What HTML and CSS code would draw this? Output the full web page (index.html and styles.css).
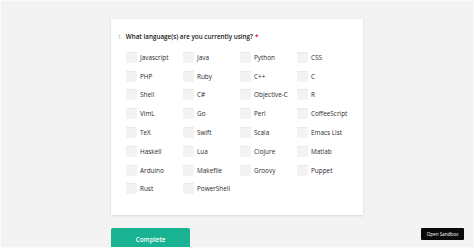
FILE: index.html
```
<!DOCTYPE HTML>
<html>

<head>
    <title>Survey</title>
    <meta name="viewport" content="width=device-width, initial-scale=1">
    <link rel="stylesheet" href="styles.css">
</head>

<body>
    <div class="page">
        <div class="card">
            <h5 class="title"><span class="num">1.</span>What language(s) are you currently using?<span class="req">*</span></h5>
            <div class="choices">
                <label class="item"><span class="box"></span>Javascript</label>
                <label class="item"><span class="box"></span>Java</label>
                <label class="item"><span class="box"></span>Python</label>
                <label class="item"><span class="box"></span>CSS</label>
                <label class="item"><span class="box"></span>PHP</label>
                <label class="item"><span class="box"></span>Ruby</label>
                <label class="item"><span class="box"></span>C++</label>
                <label class="item"><span class="box"></span>C</label>
                <label class="item"><span class="box"></span>Shell</label>
                <label class="item"><span class="box"></span>C#</label>
                <label class="item"><span class="box"></span>Objective-C</label>
                <label class="item"><span class="box"></span>R</label>
                <label class="item"><span class="box"></span>VimL</label>
                <label class="item"><span class="box"></span>Go</label>
                <label class="item"><span class="box"></span>Perl</label>
                <label class="item"><span class="box"></span>CoffeeScript</label>
                <label class="item"><span class="box"></span>TeX</label>
                <label class="item"><span class="box"></span>Swift</label>
                <label class="item"><span class="box"></span>Scala</label>
                <label class="item"><span class="box"></span>Emacs List</label>
                <label class="item"><span class="box"></span>Haskell</label>
                <label class="item"><span class="box"></span>Lua</label>
                <label class="item"><span class="box"></span>Clojure</label>
                <label class="item"><span class="box"></span>Matlab</label>
                <label class="item"><span class="box"></span>Arduino</label>
                <label class="item"><span class="box"></span>Makefile</label>
                <label class="item"><span class="box"></span>Groovy</label>
                <label class="item"><span class="box"></span>Puppet</label>
                <label class="item"><span class="box"></span>Rust</label>
                <label class="item"><span class="box"></span>PowerShell</label>
            </div>
        </div>
        <button class="complete">Complete</button>
    </div>
    <a class="sandbox">Open Sandbox</a>
</body>

</html>
```

FILE: styles.css
```
html {
    font-family: "Open Sans", "Liberation Sans", sans-serif;
    background-color: #fbfbfb;
}

body {
    margin: 0;
}

.page {
    margin: 1px;
    height: 246px;
    overflow: hidden;
    background-color: #f3f3f3;
    padding: 18px 0 0 110px;
    box-sizing: border-box;
}

.card {
    width: 252px;
    box-sizing: border-box;
    background-color: #fff;
    box-shadow: 0 1px 2px rgba(0, 0, 0, .12);
    padding: 12px 0 17px 15px;
}

.title {
    margin: 0 0 5px -8px;
    font-size: 6.3px;
    font-weight: 600;
    color: #161616;
    line-height: 11px;
}

.num {
    font-size: 4.5px;
    font-weight: 400;
    color: #909090;
    margin-right: 4px;
}

.req {
    color: #e60a3e;
    margin-left: 2px;
}

.choices {
    display: grid;
    grid-template-columns: repeat(4, 57px);
    grid-auto-rows: 18.8px;
}

.item {
    display: flex;
    align-items: center;
    gap: 3px;
    font-size: 6.4px;
    color: #2a2a2a;
}

.box {
    width: 11px;
    height: 11px;
    background-color: #f3f3f3;
    border-radius: 1px;
    box-shadow: inset 0 0.5px 0 rgba(0, 0, 0, .08);
    flex: none;
}

.complete {
    display: block;
    margin-top: 13px;
    width: 79px;
    height: 26px;
    border: none;
    border-radius: 2px;
    background-color: #19b394;
    color: #fff;
    font-family: inherit;
    font-size: 6.4px;
    font-weight: 600;
    padding: 0 0 4px;
}

.sandbox {
    position: fixed;
    left: 421px;
    top: 228px;
    width: 43px;
    height: 12px;
    background-color: #0a0a0a;
    color: #fff;
    font-size: 4.6px;
    line-height: 12px;
    text-align: center;
    border-radius: 1px;
}
```
